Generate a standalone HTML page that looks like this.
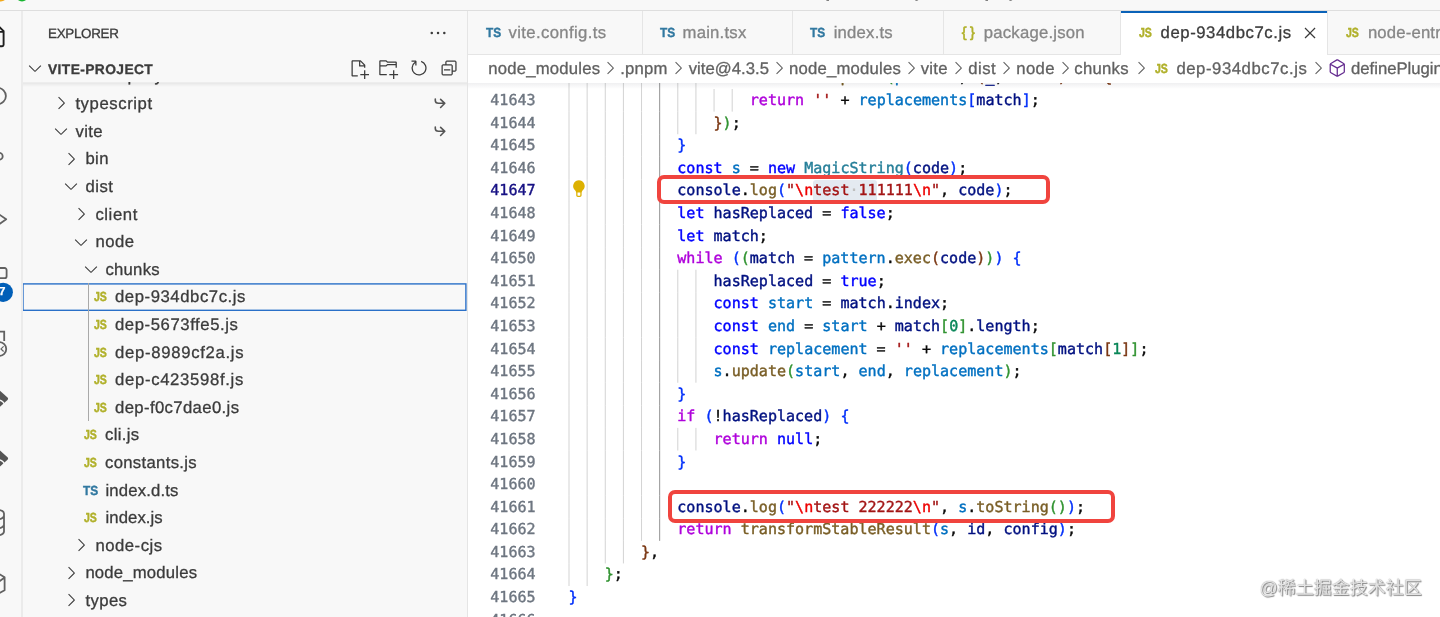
<!DOCTYPE html>
<html lang="zh"><head><meta charset="utf-8"><title>dep-934dbc7c.js — vite-project</title>
<style>
html,body{margin:0;padding:0}
body{width:1440px;height:617px;overflow:hidden;position:relative;background:#fff;font-family:"Liberation Sans", "Noto Sans CJK SC", sans-serif;-webkit-font-smoothing:antialiased;text-rendering:geometricPrecision}
#w{position:absolute;left:0;top:0;width:1440px;height:617px;will-change:transform;opacity:.999}
.t{position:absolute;white-space:pre;font-family:"Liberation Sans", "Noto Sans CJK SC", sans-serif;-webkit-text-stroke:.3px}
.c{position:absolute;white-space:pre;font-family:"DejaVu Sans Mono", "Liberation Mono", monospace;font-size:15.06px;line-height:22px;height:22px;color:#0a0a0a;-webkit-text-stroke:.4px}
.i,.b{position:absolute;display:block}
.k{color:#0000ff}.f{color:#af00db}.s{color:#a31515}.e{color:#ee0000}.v{color:#001080}.n{color:#0070c1}
.m{color:#795e26}.y{color:#267f99}.d{color:#098658}.b1{color:#0431fa}.b2{color:#319331}.b3{color:#7b3814}
.clip{position:absolute;overflow:hidden}
</style></head><body><div id="w">

<div class="clip" id="code" style="left:468px;top:82px;width:972px;height:535px;background:#fff">
<div class="b" style="left:345.28px;top:98.06px;width:63.46px;height:21.89px;background:#e4eaf1;border-radius:3px"></div>
<svg class="i" style="left:0;top:0" width="972" height="535" viewBox="0 0 972 535"><rect x="100.50" y="-15.59" width="1" height="22.64" fill="#d3d3d3"/><rect x="118.63" y="-15.59" width="1" height="22.64" fill="#d3d3d3"/><rect x="136.76" y="-15.59" width="1" height="22.64" fill="#d3d3d3"/><rect x="154.90" y="-15.59" width="1" height="22.64" fill="#d3d3d3"/><rect x="173.03" y="-15.59" width="1" height="22.64" fill="#d3d3d3"/><rect x="191.16" y="-15.59" width="1" height="22.64" fill="#939393"/><rect x="209.29" y="-15.59" width="1" height="22.64" fill="#d3d3d3"/><rect x="227.42" y="-15.59" width="1" height="22.64" fill="#d3d3d3"/><rect x="100.50" y="7.00" width="1" height="22.64" fill="#d3d3d3"/><rect x="118.63" y="7.00" width="1" height="22.64" fill="#d3d3d3"/><rect x="136.76" y="7.00" width="1" height="22.64" fill="#d3d3d3"/><rect x="154.90" y="7.00" width="1" height="22.64" fill="#d3d3d3"/><rect x="173.03" y="7.00" width="1" height="22.64" fill="#d3d3d3"/><rect x="191.16" y="7.00" width="1" height="22.64" fill="#939393"/><rect x="209.29" y="7.00" width="1" height="22.64" fill="#d3d3d3"/><rect x="227.42" y="7.00" width="1" height="22.64" fill="#d3d3d3"/><rect x="245.56" y="7.00" width="1" height="22.64" fill="#d3d3d3"/><rect x="263.69" y="7.00" width="1" height="22.64" fill="#d3d3d3"/><rect x="100.50" y="29.59" width="1" height="22.64" fill="#d3d3d3"/><rect x="118.63" y="29.59" width="1" height="22.64" fill="#d3d3d3"/><rect x="136.76" y="29.59" width="1" height="22.64" fill="#d3d3d3"/><rect x="154.90" y="29.59" width="1" height="22.64" fill="#d3d3d3"/><rect x="173.03" y="29.59" width="1" height="22.64" fill="#d3d3d3"/><rect x="191.16" y="29.59" width="1" height="22.64" fill="#939393"/><rect x="209.29" y="29.59" width="1" height="22.64" fill="#d3d3d3"/><rect x="227.42" y="29.59" width="1" height="22.64" fill="#d3d3d3"/><rect x="100.50" y="52.18" width="1" height="22.64" fill="#d3d3d3"/><rect x="118.63" y="52.18" width="1" height="22.64" fill="#d3d3d3"/><rect x="136.76" y="52.18" width="1" height="22.64" fill="#d3d3d3"/><rect x="154.90" y="52.18" width="1" height="22.64" fill="#d3d3d3"/><rect x="173.03" y="52.18" width="1" height="22.64" fill="#d3d3d3"/><rect x="191.16" y="52.18" width="1" height="22.64" fill="#939393"/><rect x="100.50" y="74.77" width="1" height="22.64" fill="#d3d3d3"/><rect x="118.63" y="74.77" width="1" height="22.64" fill="#d3d3d3"/><rect x="136.76" y="74.77" width="1" height="22.64" fill="#d3d3d3"/><rect x="154.90" y="74.77" width="1" height="22.64" fill="#d3d3d3"/><rect x="173.03" y="74.77" width="1" height="22.64" fill="#d3d3d3"/><rect x="191.16" y="74.77" width="1" height="22.64" fill="#939393"/><rect x="100.50" y="97.36" width="1" height="22.64" fill="#d3d3d3"/><rect x="118.63" y="97.36" width="1" height="22.64" fill="#d3d3d3"/><rect x="136.76" y="97.36" width="1" height="22.64" fill="#d3d3d3"/><rect x="154.90" y="97.36" width="1" height="22.64" fill="#d3d3d3"/><rect x="173.03" y="97.36" width="1" height="22.64" fill="#d3d3d3"/><rect x="191.16" y="97.36" width="1" height="22.64" fill="#939393"/><rect x="100.50" y="119.95" width="1" height="22.64" fill="#d3d3d3"/><rect x="118.63" y="119.95" width="1" height="22.64" fill="#d3d3d3"/><rect x="136.76" y="119.95" width="1" height="22.64" fill="#d3d3d3"/><rect x="154.90" y="119.95" width="1" height="22.64" fill="#d3d3d3"/><rect x="173.03" y="119.95" width="1" height="22.64" fill="#d3d3d3"/><rect x="191.16" y="119.95" width="1" height="22.64" fill="#939393"/><rect x="100.50" y="142.54" width="1" height="22.64" fill="#d3d3d3"/><rect x="118.63" y="142.54" width="1" height="22.64" fill="#d3d3d3"/><rect x="136.76" y="142.54" width="1" height="22.64" fill="#d3d3d3"/><rect x="154.90" y="142.54" width="1" height="22.64" fill="#d3d3d3"/><rect x="173.03" y="142.54" width="1" height="22.64" fill="#d3d3d3"/><rect x="191.16" y="142.54" width="1" height="22.64" fill="#939393"/><rect x="100.50" y="165.13" width="1" height="22.64" fill="#d3d3d3"/><rect x="118.63" y="165.13" width="1" height="22.64" fill="#d3d3d3"/><rect x="136.76" y="165.13" width="1" height="22.64" fill="#d3d3d3"/><rect x="154.90" y="165.13" width="1" height="22.64" fill="#d3d3d3"/><rect x="173.03" y="165.13" width="1" height="22.64" fill="#d3d3d3"/><rect x="191.16" y="165.13" width="1" height="22.64" fill="#939393"/><rect x="100.50" y="187.72" width="1" height="22.64" fill="#d3d3d3"/><rect x="118.63" y="187.72" width="1" height="22.64" fill="#d3d3d3"/><rect x="136.76" y="187.72" width="1" height="22.64" fill="#d3d3d3"/><rect x="154.90" y="187.72" width="1" height="22.64" fill="#d3d3d3"/><rect x="173.03" y="187.72" width="1" height="22.64" fill="#d3d3d3"/><rect x="191.16" y="187.72" width="1" height="22.64" fill="#939393"/><rect x="209.29" y="187.72" width="1" height="22.64" fill="#d3d3d3"/><rect x="227.42" y="187.72" width="1" height="22.64" fill="#d3d3d3"/><rect x="100.50" y="210.31" width="1" height="22.64" fill="#d3d3d3"/><rect x="118.63" y="210.31" width="1" height="22.64" fill="#d3d3d3"/><rect x="136.76" y="210.31" width="1" height="22.64" fill="#d3d3d3"/><rect x="154.90" y="210.31" width="1" height="22.64" fill="#d3d3d3"/><rect x="173.03" y="210.31" width="1" height="22.64" fill="#d3d3d3"/><rect x="191.16" y="210.31" width="1" height="22.64" fill="#939393"/><rect x="209.29" y="210.31" width="1" height="22.64" fill="#d3d3d3"/><rect x="227.42" y="210.31" width="1" height="22.64" fill="#d3d3d3"/><rect x="100.50" y="232.90" width="1" height="22.64" fill="#d3d3d3"/><rect x="118.63" y="232.90" width="1" height="22.64" fill="#d3d3d3"/><rect x="136.76" y="232.90" width="1" height="22.64" fill="#d3d3d3"/><rect x="154.90" y="232.90" width="1" height="22.64" fill="#d3d3d3"/><rect x="173.03" y="232.90" width="1" height="22.64" fill="#d3d3d3"/><rect x="191.16" y="232.90" width="1" height="22.64" fill="#939393"/><rect x="209.29" y="232.90" width="1" height="22.64" fill="#d3d3d3"/><rect x="227.42" y="232.90" width="1" height="22.64" fill="#d3d3d3"/><rect x="100.50" y="255.49" width="1" height="22.64" fill="#d3d3d3"/><rect x="118.63" y="255.49" width="1" height="22.64" fill="#d3d3d3"/><rect x="136.76" y="255.49" width="1" height="22.64" fill="#d3d3d3"/><rect x="154.90" y="255.49" width="1" height="22.64" fill="#d3d3d3"/><rect x="173.03" y="255.49" width="1" height="22.64" fill="#d3d3d3"/><rect x="191.16" y="255.49" width="1" height="22.64" fill="#939393"/><rect x="209.29" y="255.49" width="1" height="22.64" fill="#d3d3d3"/><rect x="227.42" y="255.49" width="1" height="22.64" fill="#d3d3d3"/><rect x="100.50" y="278.08" width="1" height="22.64" fill="#d3d3d3"/><rect x="118.63" y="278.08" width="1" height="22.64" fill="#d3d3d3"/><rect x="136.76" y="278.08" width="1" height="22.64" fill="#d3d3d3"/><rect x="154.90" y="278.08" width="1" height="22.64" fill="#d3d3d3"/><rect x="173.03" y="278.08" width="1" height="22.64" fill="#d3d3d3"/><rect x="191.16" y="278.08" width="1" height="22.64" fill="#939393"/><rect x="209.29" y="278.08" width="1" height="22.64" fill="#d3d3d3"/><rect x="227.42" y="278.08" width="1" height="22.64" fill="#d3d3d3"/><rect x="100.50" y="300.67" width="1" height="22.64" fill="#d3d3d3"/><rect x="118.63" y="300.67" width="1" height="22.64" fill="#d3d3d3"/><rect x="136.76" y="300.67" width="1" height="22.64" fill="#d3d3d3"/><rect x="154.90" y="300.67" width="1" height="22.64" fill="#d3d3d3"/><rect x="173.03" y="300.67" width="1" height="22.64" fill="#d3d3d3"/><rect x="191.16" y="300.67" width="1" height="22.64" fill="#939393"/><rect x="100.50" y="323.26" width="1" height="22.64" fill="#d3d3d3"/><rect x="118.63" y="323.26" width="1" height="22.64" fill="#d3d3d3"/><rect x="136.76" y="323.26" width="1" height="22.64" fill="#d3d3d3"/><rect x="154.90" y="323.26" width="1" height="22.64" fill="#d3d3d3"/><rect x="173.03" y="323.26" width="1" height="22.64" fill="#d3d3d3"/><rect x="191.16" y="323.26" width="1" height="22.64" fill="#939393"/><rect x="100.50" y="345.85" width="1" height="22.64" fill="#d3d3d3"/><rect x="118.63" y="345.85" width="1" height="22.64" fill="#d3d3d3"/><rect x="136.76" y="345.85" width="1" height="22.64" fill="#d3d3d3"/><rect x="154.90" y="345.85" width="1" height="22.64" fill="#d3d3d3"/><rect x="173.03" y="345.85" width="1" height="22.64" fill="#d3d3d3"/><rect x="191.16" y="345.85" width="1" height="22.64" fill="#939393"/><rect x="209.29" y="345.85" width="1" height="22.64" fill="#d3d3d3"/><rect x="227.42" y="345.85" width="1" height="22.64" fill="#d3d3d3"/><rect x="100.50" y="368.44" width="1" height="22.64" fill="#d3d3d3"/><rect x="118.63" y="368.44" width="1" height="22.64" fill="#d3d3d3"/><rect x="136.76" y="368.44" width="1" height="22.64" fill="#d3d3d3"/><rect x="154.90" y="368.44" width="1" height="22.64" fill="#d3d3d3"/><rect x="173.03" y="368.44" width="1" height="22.64" fill="#d3d3d3"/><rect x="191.16" y="368.44" width="1" height="22.64" fill="#939393"/><rect x="100.50" y="391.03" width="1" height="22.64" fill="#d3d3d3"/><rect x="118.63" y="391.03" width="1" height="22.64" fill="#d3d3d3"/><rect x="136.76" y="391.03" width="1" height="22.64" fill="#d3d3d3"/><rect x="154.90" y="391.03" width="1" height="22.64" fill="#d3d3d3"/><rect x="173.03" y="391.03" width="1" height="22.64" fill="#d3d3d3"/><rect x="191.16" y="391.03" width="1" height="22.64" fill="#939393"/><rect x="100.50" y="413.62" width="1" height="22.64" fill="#d3d3d3"/><rect x="118.63" y="413.62" width="1" height="22.64" fill="#d3d3d3"/><rect x="136.76" y="413.62" width="1" height="22.64" fill="#d3d3d3"/><rect x="154.90" y="413.62" width="1" height="22.64" fill="#d3d3d3"/><rect x="173.03" y="413.62" width="1" height="22.64" fill="#d3d3d3"/><rect x="191.16" y="413.62" width="1" height="22.64" fill="#939393"/><rect x="100.50" y="436.21" width="1" height="22.64" fill="#d3d3d3"/><rect x="118.63" y="436.21" width="1" height="22.64" fill="#d3d3d3"/><rect x="136.76" y="436.21" width="1" height="22.64" fill="#d3d3d3"/><rect x="154.90" y="436.21" width="1" height="22.64" fill="#d3d3d3"/><rect x="173.03" y="436.21" width="1" height="22.64" fill="#d3d3d3"/><rect x="191.16" y="436.21" width="1" height="22.64" fill="#939393"/><rect x="100.50" y="458.80" width="1" height="22.64" fill="#d3d3d3"/><rect x="118.63" y="458.80" width="1" height="22.64" fill="#d3d3d3"/><rect x="136.76" y="458.80" width="1" height="22.64" fill="#d3d3d3"/><rect x="154.90" y="458.80" width="1" height="22.64" fill="#d3d3d3"/><rect x="100.50" y="481.39" width="1" height="22.64" fill="#d3d3d3"/><rect x="118.63" y="481.39" width="1" height="22.64" fill="#d3d3d3"/></svg>
<span class="c" style="left:22.30px;top:-16.00px;color:#6e7681">41642</span>
<span class="c" style="left:245.56px;top:-16.00px"><span class="f">return</span> <span class="v">code</span>.<span class="m">replace</span><span class="b2">(</span><span class="n">pattern</span>, <span class="b3">(</span><span class="v">_</span>, <span class="v">match</span><span class="b3">)</span> <span class="k">=&gt;</span> <span class="b3">{</span></span>
<span class="c" style="left:22.30px;top:7.00px;color:#6e7681">41643</span>
<span class="c" style="left:281.82px;top:7.00px"><span class="f">return</span> <span class="s">''</span> + <span class="n">replacements</span><span class="b1">[</span><span class="v">match</span><span class="b1">]</span>;</span>
<span class="c" style="left:22.30px;top:30.00px;color:#6e7681">41644</span>
<span class="c" style="left:245.56px;top:30.00px"><span class="b3">}</span><span class="b2">)</span>;</span>
<span class="c" style="left:22.30px;top:52.00px;color:#6e7681">41645</span>
<span class="c" style="left:209.29px;top:52.00px"><span class="b1">}</span></span>
<span class="c" style="left:22.30px;top:75.00px;color:#6e7681">41646</span>
<span class="c" style="left:209.29px;top:75.00px"><span class="k">const</span> <span class="n">s</span> = <span class="k">new</span> <span class="y">MagicString</span><span class="b1">(</span><span class="v">code</span><span class="b1">)</span>;</span>
<span class="c" style="left:22.30px;top:97.00px;color:#171184">41647</span>
<span class="c" style="left:209.29px;top:97.00px"><span class="v">console</span>.<span class="m">log</span><span class="b1">(</span><span class="s">"</span><span class="e">\n</span><span class="s">test<span style="color:#bdbdbd">·</span>111111</span><span class="e">\n</span><span class="s">"</span>, <span class="v">code</span><span class="b1">)</span>;</span>
<span class="c" style="left:22.30px;top:120.00px;color:#6e7681">41648</span>
<span class="c" style="left:209.29px;top:120.00px"><span class="k">let</span> <span class="v">hasReplaced</span> = <span class="k">false</span>;</span>
<span class="c" style="left:22.30px;top:143.00px;color:#6e7681">41649</span>
<span class="c" style="left:209.29px;top:143.00px"><span class="k">let</span> <span class="v">match</span>;</span>
<span class="c" style="left:22.30px;top:165.00px;color:#6e7681">41650</span>
<span class="c" style="left:209.29px;top:165.00px"><span class="f">while</span> <span class="b1">(</span><span class="b2">(</span><span class="v">match</span> = <span class="n">pattern</span>.<span class="m">exec</span><span class="b3">(</span><span class="v">code</span><span class="b3">)</span><span class="b2">)</span><span class="b1">)</span> <span class="b1">{</span></span>
<span class="c" style="left:22.30px;top:188.00px;color:#6e7681">41651</span>
<span class="c" style="left:245.56px;top:188.00px"><span class="v">hasReplaced</span> = <span class="k">true</span>;</span>
<span class="c" style="left:22.30px;top:210.00px;color:#6e7681">41652</span>
<span class="c" style="left:245.56px;top:210.00px"><span class="k">const</span> <span class="n">start</span> = <span class="v">match</span>.<span class="v">index</span>;</span>
<span class="c" style="left:22.30px;top:233.00px;color:#6e7681">41653</span>
<span class="c" style="left:245.56px;top:233.00px"><span class="k">const</span> <span class="n">end</span> = <span class="n">start</span> + <span class="v">match</span><span class="b2">[</span><span class="d">0</span><span class="b2">]</span>.<span class="v">length</span>;</span>
<span class="c" style="left:22.30px;top:256.00px;color:#6e7681">41654</span>
<span class="c" style="left:245.56px;top:256.00px"><span class="k">const</span> <span class="n">replacement</span> = <span class="s">''</span> + <span class="n">replacements</span><span class="b2">[</span><span class="v">match</span><span class="b3">[</span><span class="d">1</span><span class="b3">]</span><span class="b2">]</span>;</span>
<span class="c" style="left:22.30px;top:278.00px;color:#6e7681">41655</span>
<span class="c" style="left:245.56px;top:278.00px"><span class="n">s</span>.<span class="m">update</span><span class="b2">(</span><span class="n">start</span>, <span class="n">end</span>, <span class="n">replacement</span><span class="b2">)</span>;</span>
<span class="c" style="left:22.30px;top:301.00px;color:#6e7681">41656</span>
<span class="c" style="left:209.29px;top:301.00px"><span class="b1">}</span></span>
<span class="c" style="left:22.30px;top:323.00px;color:#6e7681">41657</span>
<span class="c" style="left:209.29px;top:323.00px"><span class="f">if</span> <span class="b1">(</span>!<span class="v">hasReplaced</span><span class="b1">)</span> <span class="b1">{</span></span>
<span class="c" style="left:22.30px;top:346.00px;color:#6e7681">41658</span>
<span class="c" style="left:245.56px;top:346.00px"><span class="f">return</span> <span class="k">null</span>;</span>
<span class="c" style="left:22.30px;top:369.00px;color:#6e7681">41659</span>
<span class="c" style="left:209.29px;top:369.00px"><span class="b1">}</span></span>
<span class="c" style="left:22.30px;top:391.00px;color:#6e7681">41660</span>
<span class="c" style="left:22.30px;top:414.00px;color:#6e7681">41661</span>
<span class="c" style="left:209.29px;top:414.00px"><span class="v">console</span>.<span class="m">log</span><span class="b1">(</span><span class="s">"</span><span class="e">\n</span><span class="s">test 222222</span><span class="e">\n</span><span class="s">"</span>, <span class="n">s</span>.<span class="m">toString</span><span class="b2">(</span><span class="b2">)</span><span class="b1">)</span>;</span>
<span class="c" style="left:22.30px;top:436.00px;color:#6e7681">41662</span>
<span class="c" style="left:209.29px;top:436.00px"><span class="f">return</span> <span class="m">transformStableResult</span><span class="b1">(</span><span class="n">s</span>, <span class="v">id</span>, <span class="v">config</span><span class="b1">)</span>;</span>
<span class="c" style="left:22.30px;top:459.00px;color:#6e7681">41663</span>
<span class="c" style="left:173.03px;top:459.00px"><span class="b3">}</span>,</span>
<span class="c" style="left:22.30px;top:481.00px;color:#6e7681">41664</span>
<span class="c" style="left:136.76px;top:481.00px"><span class="b2">}</span>;</span>
<span class="c" style="left:22.30px;top:504.00px;color:#6e7681">41665</span>
<span class="c" style="left:100.50px;top:504.00px"><span class="b1">}</span></span>
<span class="c" style="left:22.30px;top:527.00px;color:#6e7681">41666</span>
<svg class="i" style="left:100.30px;top:96.90px" width="20.5" height="20.5" viewBox="0 0 16 16"><path fill="#ddb100" d="M11.67 8.658a3.661 3.661 0 0 0-.781 1.114 3.28 3.28 0 0 0-.268 1.329v1.6a1.304 1.304 0 0 1-.794 1.197 1.282 1.282 0 0 1-.509.102H7.712a1.285 1.285 0 0 1-.922-.379 1.303 1.303 0 0 1-.38-.92v-1.6c0-.479-.092-.921-.274-1.329a3.556 3.556 0 0 0-.776-1.114 4.689 4.689 0 0 1-1.006-1.437A4.187 4.187 0 0 1 4 5.5a4.432 4.432 0 0 1 .616-2.27c.197-.336.432-.64.705-.914a4.6 4.6 0 0 1 .911-.702c.338-.196.7-.348 1.084-.454a4.45 4.45 0 0 1 1.2-.16 4.476 4.476 0 0 1 2.276.614 4.475 4.475 0 0 1 1.622 1.616 4.438 4.438 0 0 1 .616 2.27c0 .617-.117 1.191-.353 1.721a4.69 4.69 0 0 1-1.006 1.437zM9.623 10.5H7.409v2.201c0 .081.028.15.09.212a.29.29 0 0 0 .213.09h1.606a.289.289 0 0 0 .213-.09.286.286 0 0 0 .09-.212V10.5z"/></svg>
<div class="b" style="left:189.00px;top:92.60px;width:384.90px;height:21.20px;border:4px solid #f0443e;border-radius:7px"></div>
<div class="b" style="left:200.40px;top:408.20px;width:438.80px;height:24.60px;border:4px solid #f0443e;border-radius:7px"></div>
<span class="t" style="left:791.5999999999999px;top:494px;font-size:18px;line-height:24px;color:rgba(255,255,255,.8);-webkit-text-stroke:0;text-shadow:0 0 1px #6e6e6e,1px 1px 1px #858585">@稀土掘金技术社区</span>
</div>
<div class="b" style="left:468.00px;top:11.00px;width:972.00px;height:43.00px;background:#f8f8f8;"></div>
<div class="b" style="left:468.00px;top:54.00px;width:972.00px;height:1.00px;background:#e5e5e5;"></div>
<div class="b" style="left:641.50px;top:11.00px;width:1.00px;height:43.00px;background:#e5e5e5;"></div>
<span class="t" style="left:485.80px;top:22.00px;font-size:13.2px;line-height:21px;color:#3178a0;font-weight:normal;-webkit-text-stroke:.4px;font-weight:bold;transform:scaleX(.9);transform-origin:0 0;">TS</span>
<span class="t" style="left:508.50px;top:20.00px;font-size:16.7px;line-height:25px;color:#868686;font-weight:normal;letter-spacing:0.374px;">vite.config.ts</span>
<div class="b" style="left:791.50px;top:11.00px;width:1.00px;height:43.00px;background:#e5e5e5;"></div>
<span class="t" style="left:659.80px;top:22.00px;font-size:13.2px;line-height:21px;color:#3178a0;font-weight:normal;-webkit-text-stroke:.4px;font-weight:bold;transform:scaleX(.9);transform-origin:0 0;">TS</span>
<span class="t" style="left:682.50px;top:20.00px;font-size:16.7px;line-height:25px;color:#868686;font-weight:normal;letter-spacing:0.232px;">main.tsx</span>
<div class="b" style="left:943.20px;top:11.00px;width:1.00px;height:43.00px;background:#e5e5e5;"></div>
<span class="t" style="left:810.30px;top:22.00px;font-size:13.2px;line-height:21px;color:#3178a0;font-weight:normal;-webkit-text-stroke:.4px;font-weight:bold;transform:scaleX(.9);transform-origin:0 0;">TS</span>
<span class="t" style="left:833.70px;top:20.00px;font-size:16.7px;line-height:25px;color:#868686;font-weight:normal;letter-spacing:0.211px;">index.ts</span>
<div class="b" style="left:1119.50px;top:11.00px;width:1.00px;height:43.00px;background:#e5e5e5;"></div>
<span class="t" style="left:961.70px;top:22.00px;font-size:14.5px;line-height:22px;color:#b1b12c;font-weight:normal;letter-spacing:3.456px;-webkit-text-stroke:.6px;">{}</span>
<span class="t" style="left:983.80px;top:20.00px;font-size:16.7px;line-height:25px;color:#868686;font-weight:normal;letter-spacing:0.221px;">package.json</span>
<div class="b" style="left:1120.50px;top:11.00px;width:207.30px;height:44.00px;background:#fff;"></div>
<div class="b" style="left:1120.50px;top:11.00px;width:207.30px;height:2.00px;background:#0a62b8;"></div>
<div class="b" style="left:1326.80px;top:11.00px;width:1.00px;height:44.00px;background:#e5e5e5;"></div>
<div class="b" style="left:1119.50px;top:11.00px;width:1.00px;height:44.00px;background:#e5e5e5;"></div>
<span class="t" style="left:1139.00px;top:22.00px;font-size:13.2px;line-height:21px;color:#b1b12c;font-weight:normal;-webkit-text-stroke:.45px;font-weight:bold;transform:scaleX(.8);transform-origin:0 0;">JS</span>
<span class="t" style="left:1160.60px;top:20.00px;font-size:16.7px;line-height:25px;color:#3b3b3b;font-weight:normal;letter-spacing:0.569px;">dep-934dbc7c.js</span>
<svg class="i" style="left:1299.56px;top:23.46px" width="20.08" height="20.08" viewBox="0 0 16 16"><path fill="#3b3b3b" fill-rule="evenodd" clip-rule="evenodd" d="M8 8.707l3.646 3.647.708-.707L8.707 8l3.647-3.646-.707-.708L8 7.293 4.354 3.646l-.707.708L7.293 8l-3.646 3.646.707.708L8 8.707z"/></svg>
<div class="b" style="left:1499.00px;top:11.00px;width:1.00px;height:43.00px;background:#e5e5e5;"></div>
<span class="t" style="left:1346.00px;top:22.00px;font-size:13.2px;line-height:21px;color:#b1b12c;font-weight:normal;-webkit-text-stroke:.45px;font-weight:bold;transform:scaleX(.8);transform-origin:0 0;">JS</span>
<span class="t" style="left:1367.90px;top:20.00px;font-size:16.7px;line-height:25px;color:#868686;font-weight:normal;letter-spacing:0.174px;">node-entry.js</span>
<div class="b" style="left:468.00px;top:55.00px;width:972.00px;height:28.00px;background:#fff;"></div>
<span class="t" style="left:488.20px;top:56.00px;font-size:16.7px;line-height:25px;color:#616161;font-weight:normal;letter-spacing:0.210px;">node_modules</span>
<span class="t" style="left:620.30px;top:56.00px;font-size:16.7px;line-height:25px;color:#616161;font-weight:normal;letter-spacing:0.162px;">.pnpm</span>
<span class="t" style="left:688.70px;top:56.00px;font-size:16.7px;line-height:25px;color:#616161;font-weight:normal;letter-spacing:0.027px;">vite@4.3.5</span>
<span class="t" style="left:789.00px;top:56.00px;font-size:16.7px;line-height:25px;color:#616161;font-weight:normal;letter-spacing:0.210px;">node_modules</span>
<span class="t" style="left:920.70px;top:56.00px;font-size:16.7px;line-height:25px;color:#616161;font-weight:normal;letter-spacing:0.258px;">vite</span>
<span class="t" style="left:968.20px;top:56.00px;font-size:16.7px;line-height:25px;color:#616161;font-weight:normal;letter-spacing:0.508px;">dist</span>
<span class="t" style="left:1016.30px;top:56.00px;font-size:16.7px;line-height:25px;color:#616161;font-weight:normal;letter-spacing:0.344px;">node</span>
<span class="t" style="left:1074.30px;top:56.00px;font-size:16.7px;line-height:25px;color:#616161;font-weight:normal;letter-spacing:0.271px;">chunks</span>
<svg class="i" style="left:599.96px;top:58.26px" width="20.08" height="20.08" viewBox="0 0 16 16"><path fill="#616161" fill-rule="evenodd" clip-rule="evenodd" d="M10.072 8.024L5.715 3.667l.618-.62L11 7.716v.618L6.333 13l-.618-.619 4.357-4.357z"/></svg>
<svg class="i" style="left:668.36px;top:58.26px" width="20.08" height="20.08" viewBox="0 0 16 16"><path fill="#616161" fill-rule="evenodd" clip-rule="evenodd" d="M10.072 8.024L5.715 3.667l.618-.62L11 7.716v.618L6.333 13l-.618-.619 4.357-4.357z"/></svg>
<svg class="i" style="left:769.16px;top:58.26px" width="20.08" height="20.08" viewBox="0 0 16 16"><path fill="#616161" fill-rule="evenodd" clip-rule="evenodd" d="M10.072 8.024L5.715 3.667l.618-.62L11 7.716v.618L6.333 13l-.618-.619 4.357-4.357z"/></svg>
<svg class="i" style="left:900.96px;top:58.26px" width="20.08" height="20.08" viewBox="0 0 16 16"><path fill="#616161" fill-rule="evenodd" clip-rule="evenodd" d="M10.072 8.024L5.715 3.667l.618-.62L11 7.716v.618L6.333 13l-.618-.619 4.357-4.357z"/></svg>
<svg class="i" style="left:947.96px;top:58.26px" width="20.08" height="20.08" viewBox="0 0 16 16"><path fill="#616161" fill-rule="evenodd" clip-rule="evenodd" d="M10.072 8.024L5.715 3.667l.618-.62L11 7.716v.618L6.333 13l-.618-.619 4.357-4.357z"/></svg>
<svg class="i" style="left:995.96px;top:58.26px" width="20.08" height="20.08" viewBox="0 0 16 16"><path fill="#616161" fill-rule="evenodd" clip-rule="evenodd" d="M10.072 8.024L5.715 3.667l.618-.62L11 7.716v.618L6.333 13l-.618-.619 4.357-4.357z"/></svg>
<svg class="i" style="left:1054.96px;top:58.26px" width="20.08" height="20.08" viewBox="0 0 16 16"><path fill="#616161" fill-rule="evenodd" clip-rule="evenodd" d="M10.072 8.024L5.715 3.667l.618-.62L11 7.716v.618L6.333 13l-.618-.619 4.357-4.357z"/></svg>
<svg class="i" style="left:1130.66px;top:58.26px" width="20.08" height="20.08" viewBox="0 0 16 16"><path fill="#616161" fill-rule="evenodd" clip-rule="evenodd" d="M10.072 8.024L5.715 3.667l.618-.62L11 7.716v.618L6.333 13l-.618-.619 4.357-4.357z"/></svg>
<svg class="i" style="left:1307.96px;top:58.26px" width="20.08" height="20.08" viewBox="0 0 16 16"><path fill="#616161" fill-rule="evenodd" clip-rule="evenodd" d="M10.072 8.024L5.715 3.667l.618-.62L11 7.716v.618L6.333 13l-.618-.619 4.357-4.357z"/></svg>
<span class="t" style="left:1154.80px;top:58.00px;font-size:13.2px;line-height:21px;color:#b1b12c;font-weight:normal;-webkit-text-stroke:.45px;font-weight:bold;transform:scaleX(.8);transform-origin:0 0;">JS</span>
<span class="t" style="left:1176.40px;top:56.00px;font-size:16.7px;line-height:25px;color:#616161;font-weight:normal;letter-spacing:0.569px;">dep-934dbc7c.js</span>
<svg class="i" style="left:1327.25px;top:57.75px" width="20.50" height="20.50" viewBox="0 0 16 16"><path fill="#652d90" fill-rule="evenodd" clip-rule="evenodd" d="M13.51 4l-5-3h-1l-5 3-.49.86v6l.49.85 5 3h1l5-3 .49-.85v-6L13.51 4zm-6 9.56l-4.5-2.7V5.7l4.5 2.45v5.41zM3.27 4.7l4.74-2.84 4.74 2.84-4.74 2.59L3.27 4.7zm9.74 6.16l-4.5 2.7V8.15l4.5-2.45v5.16z"/></svg>
<span class="t" style="left:1351.00px;top:56.00px;font-size:16.7px;line-height:25px;color:#616161;font-weight:normal;">definePlugin</span>
<div class="b" style="left:468.00px;top:83.00px;width:972.00px;height:6.00px;background:linear-gradient(rgba(20,30,50,.065),rgba(20,30,50,0));"></div>
<div class="b" style="left:0.00px;top:11.00px;width:467.00px;height:606.00px;background:#f8f8f8;"></div>
<div class="b" style="left:467.00px;top:11.00px;width:1.00px;height:606.00px;background:#e5e5e5;"></div>
<div class="clip" style="left:22px;top:82px;width:445px;height:535px">
<span class="t" style="left:105.60px;top:-19.00px;font-size:16.7px;line-height:25px;color:#3b3b3b;font-weight:normal;">p</span>
<span class="t" style="left:132.50px;top:-19.00px;font-size:16.7px;line-height:25px;color:#3b3b3b;font-weight:normal;">y</span>
<span class="t" style="left:53.40px;top:9.00px;font-size:16.7px;line-height:25px;color:#3b3b3b;font-weight:normal;letter-spacing:0.588px;">typescript</span>
<svg class="i" style="left:29.06px;top:11.46px" width="20.08" height="20.08" viewBox="0 0 16 16"><path fill="#3b3b3b" fill-rule="evenodd" clip-rule="evenodd" d="M10.072 8.024L5.715 3.667l.618-.62L11 7.716v.618L6.333 13l-.618-.619 4.357-4.357z"/></svg>
<svg class="i" style="left:411px;top:15.00px" width="14" height="13" viewBox="0 0 14 13"><path d="M2.3 2V3.5Q2.3 6.3 5.5 6.3H11.5M7.6 2.3L11.8 6.3L7.6 10.5" fill="none" stroke="#555" stroke-width="1.6" stroke-linecap="round" stroke-linejoin="round"/></svg>
<span class="t" style="left:53.40px;top:37.00px;font-size:16.7px;line-height:25px;color:#3b3b3b;font-weight:normal;letter-spacing:0.408px;">vite</span>
<svg class="i" style="left:29.06px;top:39.08px" width="20.08" height="20.08" viewBox="0 0 16 16"><path fill="#3b3b3b" fill-rule="evenodd" clip-rule="evenodd" d="M7.976 10.072l4.357-4.357.62.618L8.284 11h-.618L3 6.333l.619-.618 4.357 4.357z"/></svg>
<svg class="i" style="left:411px;top:42.62px" width="14" height="13" viewBox="0 0 14 13"><path d="M2.3 2V3.5Q2.3 6.3 5.5 6.3H11.5M7.6 2.3L11.8 6.3L7.6 10.5" fill="none" stroke="#555" stroke-width="1.6" stroke-linecap="round" stroke-linejoin="round"/></svg>
<span class="t" style="left:63.40px;top:64.00px;font-size:16.7px;line-height:25px;color:#3b3b3b;font-weight:normal;letter-spacing:0.406px;">bin</span>
<svg class="i" style="left:39.06px;top:66.69px" width="20.08" height="20.08" viewBox="0 0 16 16"><path fill="#3b3b3b" fill-rule="evenodd" clip-rule="evenodd" d="M10.072 8.024L5.715 3.667l.618-.62L11 7.716v.618L6.333 13l-.618-.619 4.357-4.357z"/></svg>
<span class="t" style="left:63.40px;top:92.00px;font-size:16.7px;line-height:25px;color:#3b3b3b;font-weight:normal;letter-spacing:0.508px;">dist</span>
<svg class="i" style="left:39.06px;top:94.30px" width="20.08" height="20.08" viewBox="0 0 16 16"><path fill="#3b3b3b" fill-rule="evenodd" clip-rule="evenodd" d="M7.976 10.072l4.357-4.357.62.618L8.284 11h-.618L3 6.333l.619-.618 4.357 4.357z"/></svg>
<span class="t" style="left:73.40px;top:120.00px;font-size:16.7px;line-height:25px;color:#3b3b3b;font-weight:normal;letter-spacing:0.589px;">client</span>
<svg class="i" style="left:49.06px;top:121.91px" width="20.08" height="20.08" viewBox="0 0 16 16"><path fill="#3b3b3b" fill-rule="evenodd" clip-rule="evenodd" d="M10.072 8.024L5.715 3.667l.618-.62L11 7.716v.618L6.333 13l-.618-.619 4.357-4.357z"/></svg>
<span class="t" style="left:73.40px;top:147.00px;font-size:16.7px;line-height:25px;color:#3b3b3b;font-weight:normal;letter-spacing:0.469px;">node</span>
<svg class="i" style="left:49.06px;top:149.52px" width="20.08" height="20.08" viewBox="0 0 16 16"><path fill="#3b3b3b" fill-rule="evenodd" clip-rule="evenodd" d="M7.976 10.072l4.357-4.357.62.618L8.284 11h-.618L3 6.333l.619-.618 4.357 4.357z"/></svg>
<span class="t" style="left:83.40px;top:175.00px;font-size:16.7px;line-height:25px;color:#3b3b3b;font-weight:normal;letter-spacing:0.271px;">chunks</span>
<svg class="i" style="left:59.06px;top:177.13px" width="20.08" height="20.08" viewBox="0 0 16 16"><path fill="#3b3b3b" fill-rule="evenodd" clip-rule="evenodd" d="M7.976 10.072l4.357-4.357.62.618L8.284 11h-.618L3 6.333l.619-.618 4.357 4.357z"/></svg>
<svg class="i" style="left:0;top:199px" width="445" height="34" viewBox="0 0 445 34"><rect x="1.00" y="2.90" width="442.90" height="26.40" fill="none" stroke="#2a70c8" stroke-width="1.4"/></svg>
<span class="t" style="left:93.00px;top:202.00px;font-size:16.7px;line-height:25px;color:#3b3b3b;font-weight:normal;letter-spacing:0.569px;">dep-934dbc7c.js</span>
<span class="t" style="left:71.90px;top:204.00px;font-size:13.2px;line-height:21px;color:#b1b12c;font-weight:normal;-webkit-text-stroke:.45px;font-weight:bold;transform:scaleX(.8);transform-origin:0 0;">JS</span>
<span class="t" style="left:93.00px;top:230.00px;font-size:16.7px;line-height:25px;color:#3b3b3b;font-weight:normal;letter-spacing:0.583px;">dep-5673ffe5.js</span>
<span class="t" style="left:71.90px;top:232.00px;font-size:13.2px;line-height:21px;color:#b1b12c;font-weight:normal;-webkit-text-stroke:.45px;font-weight:bold;transform:scaleX(.8);transform-origin:0 0;">JS</span>
<span class="t" style="left:93.00px;top:258.00px;font-size:16.7px;line-height:25px;color:#3b3b3b;font-weight:normal;letter-spacing:0.702px;">dep-8989cf2a.js</span>
<span class="t" style="left:71.90px;top:260.00px;font-size:13.2px;line-height:21px;color:#b1b12c;font-weight:normal;-webkit-text-stroke:.45px;font-weight:bold;transform:scaleX(.8);transform-origin:0 0;">JS</span>
<span class="t" style="left:93.00px;top:285.00px;font-size:16.7px;line-height:25px;color:#3b3b3b;font-weight:normal;letter-spacing:0.682px;">dep-c423598f.js</span>
<span class="t" style="left:71.90px;top:287.00px;font-size:13.2px;line-height:21px;color:#b1b12c;font-weight:normal;-webkit-text-stroke:.45px;font-weight:bold;transform:scaleX(.8);transform-origin:0 0;">JS</span>
<span class="t" style="left:93.00px;top:313.00px;font-size:16.7px;line-height:25px;color:#3b3b3b;font-weight:normal;letter-spacing:0.376px;">dep-f0c7dae0.js</span>
<span class="t" style="left:71.90px;top:315.00px;font-size:13.2px;line-height:21px;color:#b1b12c;font-weight:normal;-webkit-text-stroke:.45px;font-weight:bold;transform:scaleX(.8);transform-origin:0 0;">JS</span>
<span class="t" style="left:83.00px;top:340.00px;font-size:16.7px;line-height:25px;color:#3b3b3b;font-weight:normal;letter-spacing:0.341px;">cli.js</span>
<span class="t" style="left:61.90px;top:342.00px;font-size:13.2px;line-height:21px;color:#b1b12c;font-weight:normal;-webkit-text-stroke:.45px;font-weight:bold;transform:scaleX(.8);transform-origin:0 0;">JS</span>
<span class="t" style="left:83.00px;top:368.00px;font-size:16.7px;line-height:25px;color:#3b3b3b;font-weight:normal;letter-spacing:0.323px;">constants.js</span>
<span class="t" style="left:61.90px;top:370.00px;font-size:13.2px;line-height:21px;color:#b1b12c;font-weight:normal;-webkit-text-stroke:.45px;font-weight:bold;transform:scaleX(.8);transform-origin:0 0;">JS</span>
<span class="t" style="left:83.50px;top:396.00px;font-size:16.7px;line-height:25px;color:#3b3b3b;font-weight:normal;letter-spacing:0.156px;">index.d.ts</span>
<span class="t" style="left:61.00px;top:398.00px;font-size:13.2px;line-height:21px;color:#3178a0;font-weight:normal;-webkit-text-stroke:.4px;font-weight:bold;transform:scaleX(.9);transform-origin:0 0;">TS</span>
<span class="t" style="left:83.50px;top:423.00px;font-size:16.7px;line-height:25px;color:#3b3b3b;font-weight:normal;letter-spacing:0.088px;">index.js</span>
<span class="t" style="left:62.40px;top:425.00px;font-size:13.2px;line-height:21px;color:#b1b12c;font-weight:normal;-webkit-text-stroke:.45px;font-weight:bold;transform:scaleX(.8);transform-origin:0 0;">JS</span>
<span class="t" style="left:73.40px;top:451.00px;font-size:16.7px;line-height:25px;color:#3b3b3b;font-weight:normal;letter-spacing:0.515px;">node-cjs</span>
<svg class="i" style="left:49.06px;top:453.22px" width="20.08" height="20.08" viewBox="0 0 16 16"><path fill="#3b3b3b" fill-rule="evenodd" clip-rule="evenodd" d="M10.072 8.024L5.715 3.667l.618-.62L11 7.716v.618L6.333 13l-.618-.619 4.357-4.357z"/></svg>
<span class="t" style="left:63.40px;top:478.00px;font-size:16.7px;line-height:25px;color:#3b3b3b;font-weight:normal;letter-spacing:0.193px;">node_modules</span>
<svg class="i" style="left:39.06px;top:480.83px" width="20.08" height="20.08" viewBox="0 0 16 16"><path fill="#3b3b3b" fill-rule="evenodd" clip-rule="evenodd" d="M10.072 8.024L5.715 3.667l.618-.62L11 7.716v.618L6.333 13l-.618-.619 4.357-4.357z"/></svg>
<span class="t" style="left:63.40px;top:506.00px;font-size:16.7px;line-height:25px;color:#3b3b3b;font-weight:normal;letter-spacing:0.422px;">types</span>
<svg class="i" style="left:39.06px;top:508.44px" width="20.08" height="20.08" viewBox="0 0 16 16"><path fill="#3b3b3b" fill-rule="evenodd" clip-rule="evenodd" d="M10.072 8.024L5.715 3.667l.618-.62L11 7.716v.618L6.333 13l-.618-.619 4.357-4.357z"/></svg>
<div class="b" style="left:66.00px;top:200.97px;width:1.00px;height:138.05px;background:#a9a9a9;"></div>
</div>
<div class="b" style="left:22.00px;top:11.00px;width:445.00px;height:71.00px;background:#f8f8f8;"></div>
<div class="b" style="left:22.00px;top:82.00px;width:445.00px;height:5.00px;background:linear-gradient(rgba(0,0,0,.035),rgba(0,0,0,.06) 30%,rgba(0,0,0,.035) 55%,rgba(0,0,0,0));"></div>
<span class="t" style="left:48.00px;top:23.00px;font-size:13.4px;line-height:21px;color:#3b3b3b;font-weight:normal;letter-spacing:-0.292px;">EXPLORER</span>
<svg class="i" style="left:428.16px;top:22.76px" width="20.08" height="20.08" viewBox="0 0 16 16"><path fill="#3b3b3b" fill-rule="evenodd" clip-rule="evenodd" d="M4 8a1 1 0 1 1-2 0 1 1 0 0 1 2 0zm5 0a1 1 0 1 1-2 0 1 1 0 0 1 2 0zm5 0a1 1 0 1 1-2 0 1 1 0 0 1 2 0z"/></svg>
<svg class="i" style="left:25.26px;top:58.46px" width="20.08" height="20.08" viewBox="0 0 16 16"><path fill="#3b3b3b" fill-rule="evenodd" clip-rule="evenodd" d="M7.976 10.072l4.357-4.357.62.618L8.284 11h-.618L3 6.333l.619-.618 4.357 4.357z"/></svg>
<span class="t" style="left:48.00px;top:59.00px;font-size:13.8px;line-height:21px;color:#3b3b3b;font-weight:bold;letter-spacing:0.397px;">VITE-PROJECT</span>
<svg class="i" style="left:349.26px;top:58.56px" width="20.08" height="20.08" viewBox="0 0 16 16"><path fill="#3b3b3b" fill-rule="evenodd" clip-rule="evenodd" d="M9.5 1.1l3.4 3.5.1.4v2h-1V6H8V2H3v11h4v1H2.5l-.5-.5v-12l.5-.5h6.7l.3.1zM9 2v3h2.9L9 2zm4 14h-1v-3H9v-1h3V9h1v3h3v1h-3v3z"/></svg>
<svg class="i" style="left:378.46px;top:58.56px" width="20.08" height="20.08" viewBox="0 0 16 16"><path fill="#3b3b3b" fill-rule="evenodd" clip-rule="evenodd" d="M14.5 2H7.71l-.85-.85L6.51 1h-5l-.5.5v11l.5.5H7v-1H1.99V6h4.49l.35-.15.86-.86H14v1.5l-.001.51h1.011V2.5L14.5 2zm-.51 2h-6.5l-.35.15-.86.86H2v-3h4.29l.85.85.36.15H14l-.01.99zM13 16h-1v-3H9v-1h3V9h1v3h3v1h-3v3z"/></svg>
<svg class="i" style="left:409.26px;top:58.26px" width="20.08" height="20.08" viewBox="0 0 16 16"><path fill="#3b3b3b" fill-rule="evenodd" clip-rule="evenodd" d="M4.681 3H2V2h3.5l.5.5V6H5V4a5 5 0 1 0 4.53-.761l.302-.954A6 6 0 1 1 4.681 3z"/></svg>
<svg class="i" style="left:438.96px;top:58.46px" width="20.08" height="20.08" viewBox="0 0 16 16"><path fill="#3b3b3b" fill-rule="evenodd" clip-rule="evenodd" d="M9 9H4v1h5V9z M5 3l1-1h7l1 1v7l-1 1h-2v2l-1 1H3l-1-1V6l1-1h2V3zm1 2h4l1 1v4h2V3H6v2zm4 1H3v7h7V6z"/></svg>
<div class="b" style="left:0.00px;top:11.00px;width:22.00px;height:606.00px;background:#f8f8f8;"></div>
<div class="b" style="left:21.00px;top:11.00px;width:2.00px;height:606.00px;background:#ebebeb;"></div>
<svg class="i" style="left:0;top:11px" width="21" height="606" viewBox="0 11 21 606" fill="none" stroke-width="1.8">
<path d="M-3 24.6L3.6 31.2V44.8Q3.6 46.2 2.2 46.2H-3M-3 31.9H3.6" stroke="#1f1f1f" stroke-width="1.9"/>
<circle cx="-2.2" cy="96" r="8.1" stroke="#616161"/>
<circle cx="-0.7" cy="156.3" r="3.4" stroke="#616161"/>
<path d="M-3 212.9L6.2 219.3L-3 225.7" stroke="#616161" stroke-linejoin="round"/>
<rect x="-8" y="268" width="14.6" height="10.2" rx="2" stroke="#616161"/>
<circle cx="3.3" cy="292.3" r="9.6" fill="#005fb8" stroke="none"/>
<path d="M-3 331.7H4.2V341" stroke="#616161"/>
<circle cx="-0.65" cy="349" r="6.9" stroke="#616161" fill="#f8f8f8"/>
<path d="M3.6 346.3L1 348.9L3.6 351.5" stroke="#616161" stroke-width="1.2"/>
<g id="gl"><path d="M-3 388L7.5 397.6Q8.7 398.8 7.5 400L-3 409.5Z" fill="#555" stroke="none"/>
<circle cx="-2.5" cy="408" r="8.1" stroke="#f8f8f8" stroke-width="1.3"/></g>
<g transform="translate(0 59.7)"><path d="M-3 388L7.5 397.6Q8.7 398.8 7.5 400L-3 409.5Z" fill="#555" stroke="none"/>
<circle cx="-2.5" cy="408" r="8.1" stroke="#f8f8f8" stroke-width="1.3"/></g>
<path d="M-3 509.7Q4 510.2 4 513.5V531.5Q4 535 -3 535.5M4 515.5Q4 519 -3 519.5M4 524.5Q4 528 -3 528.5" stroke="#616161"/>
<path d="M-3 572.6L4.6 577.3V590.3L-3 594.2M4.6 577.6L-3 583" stroke="#616161" stroke-linejoin="round"/>
</svg>
<span class="t" style="left:-1.00px;top:283.00px;font-size:11.6px;line-height:18px;color:#fff;font-weight:bold;">7</span>
<div class="b" style="left:0.00px;top:0.00px;width:1440.00px;height:10.00px;background:#f8f8f8;"></div>
<div class="b" style="left:0.00px;top:9.50px;width:1440.00px;height:1.30px;background:#dedede;"></div>
<svg class="i" style="left:0;top:0" width="40" height="4" viewBox="0 0 40 4"><circle cx="0.8" cy="-4.9" r="6.4" fill="#f2a91b"/><circle cx="22" cy="-4.9" r="6.4" fill="#17b530"/></svg>
<span class="t" style="left:807.30px;top:-20.00px;font-size:16.3px;line-height:24px;color:#3b3b3b;font-weight:bold;letter-spacing:-0.359px;">dep-934dbc7c.js — vite-project</span>
</div></body></html>
